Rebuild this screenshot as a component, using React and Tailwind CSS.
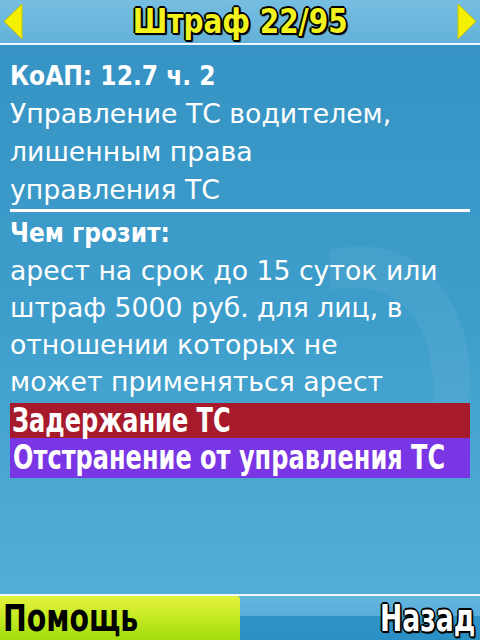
import React from 'react';

const outline =
  '[text-shadow:-2px_0_0_#000,2px_0_0_#000,0_-2px_0_#000,0_2px_0_#000,-1px_-1px_0_#000,1px_-1px_0_#000,-1px_1px_0_#000,1px_1px_0_#000,2px_2px_1px_#000]';

const Arrow = ({ dir }) => (
  <svg width="20" height="37" viewBox="0 0 20 37">
    {dir === 'left' ? (
      <polygon points="19,1 1,18.5 19,36" fill="#f4f000" stroke="#c8c400" strokeWidth="1" />
    ) : (
      <polygon points="1,1 19,18.5 1,36" fill="#f4f000" stroke="#c8c400" strokeWidth="1" />
    )}
  </svg>
);

const bodyLines = ['Управление ТС водителем,', 'лишенным права', 'управления ТС'];
const penaltyLines = [
  'арест на срок до 15 суток или',
  'штраф 5000 руб. для лиц, в',
  'отношении которых не',
  'может применяться арест',
];

export default function App() {
  return (
    <div className="relative w-[480px] h-[640px] flex flex-col overflow-hidden bg-gradient-to-b from-[#3592c3] via-[#3e9ecb] to-[#56b1da] text-white font-['DejaVu_Sans_Condensed','DejaVu_Sans',sans-serif]">
      <svg className="absolute left-0 top-0 pointer-events-none" width="480" height="640" viewBox="0 0 480 640">
        <path d="M330 250 C 420 230, 470 300, 470 380 C 470 430, 440 470, 410 480 L 395 470 C 430 440, 440 400, 430 360 C 420 300, 380 280, 330 290 Z" fill="#ffffff" opacity="0.05" />
      </svg>
      <div className="relative h-[43px] flex items-center justify-between px-[3px] bg-gradient-to-b from-[#76bee1] to-[#63b1d9]">
        <Arrow dir="left" />
        <span className={`inline-block text-[33px] font-bold leading-none text-[#f2f21e] scale-x-94 ${outline}`}>Штраф 22/95</span>
        <Arrow dir="right" />
      </div>
      <div className="relative h-[2px] bg-[#eef6fa]" />

      <div className="relative flex-1 px-[10px] pt-[12px]">
        <p className="text-[26px] font-bold leading-[38px]">КоАП: 12.7 ч. 2</p>
        {bodyLines.map(line => (
          <p key={line} className="font-['DejaVu_Sans',sans-serif] text-[26.7px] leading-[38px]">
            {line}
          </p>
        ))}
        <div className="h-[3px] bg-white" />
        <p className="mt-[3px] text-[26px] font-bold leading-[37px]">Чем грозит:</p>
        {penaltyLines.map(line => (
          <p key={line} className="font-['DejaVu_Sans',sans-serif] text-[26.7px] leading-[37px]">
            {line}
          </p>
        ))}
        <div className="mt-[3px] h-[35px] bg-[#a61a2c] px-[2px]">
          <span className="inline-block origin-left whitespace-nowrap text-[33px] font-bold leading-[35px] scale-x-81">Задержание ТС</span>
        </div>
        <div className="h-[40px] bg-[#7a35e4] px-[3px]">
          <span className="inline-block origin-left whitespace-nowrap text-[33px] font-bold leading-[40px] scale-x-81">
            Отстранение от управления ТС
          </span>
        </div>
      </div>

      <div className="relative h-[2px] bg-[#eef6fa]" />
      <div className="relative h-[44px] flex">
        <div className="w-[240px] flex items-end rounded-tr-[3px] bg-gradient-to-b from-[#e2f23c] via-[#c4ea20] to-[#a2dd0c] pl-[3px] pb-[3px]">
          <span className="inline-block origin-left text-[38px] font-bold leading-none text-black scale-x-83">Помощь</span>
        </div>
        <div className="flex-1 flex items-end justify-end bg-[linear-gradient(to_bottom,#64b6de_0%,#58addb_45%,#2f93c7_46%,#2a8fc4_100%)] pr-[5px] pb-[3px]">
          <span className={`inline-block origin-right text-[38px] font-bold leading-none text-white scale-x-78 ${outline}`}>Назад</span>
        </div>
      </div>
    </div>
  );
}
